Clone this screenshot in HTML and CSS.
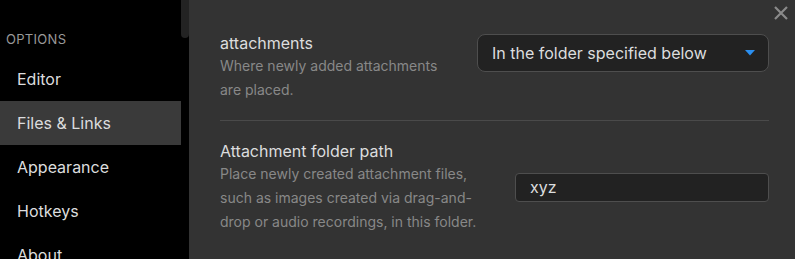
FILE: index.html
```html
<!DOCTYPE html>
<html>
<head>
<meta charset="utf-8">
<link rel="stylesheet" href="styles.css">
</head>
<body>
<div class="app">
  <aside class="sidebar">
    <nav class="nav">
      <div class="nav-heading">Options</div>
      <div class="nav-item">Editor</div>
      <div class="nav-item active">Files &amp; Links</div>
      <div class="nav-item">Appearance</div>
      <div class="nav-item">Hotkeys</div>
      <div class="nav-item">About</div>
    </nav>
    <div class="scroll-track"><div class="scroll-thumb"></div></div>
  </aside>
  <main class="content">
    <svg class="close" width="14" height="14" viewBox="0 0 14 14"><path d="M1 1 L13 13 M13 1 L1 13" stroke="#8a8a8a" stroke-width="2.2" fill="none"/></svg>
    <div class="setting first">
      <div class="info">
        <div class="name">attachments</div>
        <div class="desc">Where newly added attachments are placed.</div>
      </div>
      <div class="dropdown">
        <span>In the folder specified below</span>
        <svg class="caret" width="10" height="6" viewBox="0 0 10 6"><path d="M0 0 H10 L5 5.5 Z" fill="#2b8ff0"/></svg>
      </div>
    </div>
    <div class="setting second">
      <div class="info">
        <div class="name">Attachment folder path</div>
        <div class="desc">Place newly created attachment files, such as images created via drag-and-drop or audio recordings, in this folder.</div>
      </div>
      <div class="input">xyz</div>
    </div>
  </main>
</div>
</body>
</html>
```
FILE: styles.css
```css
html, body {
  margin: 0;
  padding: 0;
  height: 100%;
  overflow: hidden;
}
body {
  font-family: Inter, "Noto Sans", sans-serif;
  background: #333333;
  color: #dcddde;
}
.app {
  display: flex;
  height: 259px;
}
.sidebar {
  display: flex;
  background: #000;
  flex: none;
}
.nav {
  width: 181px;
  padding-top: 29px;
}
.nav-heading {
  font-size: 13px;
  text-transform: uppercase;
  color: #999;
  padding-left: 6px;
  line-height: 20px;
  letter-spacing: 0.3px;
  margin-bottom: 8px;
}
.nav-item {
  height: 44px;
  line-height: 44px;
  padding-left: 17px;
  font-size: 16px;
  color: #dcddde;
}
.nav-item.active {
  background: #3a3a3a;
}
.scroll-track {
  width: 8px;
}
.scroll-thumb {
  height: 38px;
  background: #232323;
  border-radius: 0 0 4px 4px;
}
.content {
  position: relative;
  flex: 1;
  padding: 14px 26px 0 31px;
}
.close {
  position: absolute;
  top: 6px;
  right: 7px;
}
.setting {
  display: flex;
  padding: 18px 0;
}
.setting.first {
  border-bottom: 1px solid #4a4a4a;
  align-items: flex-start;
}
.setting.second {
  align-items: center;
  padding-top: 19px;
}
.info {
  flex: 1 1 auto;
  padding-right: 20px;
}
.name {
  font-size: 16px;
  line-height: 22px;
  color: #dcddde;
}
.desc {
  font-size: 14px;
  line-height: 24px;
  color: #888;
}
.dropdown {
  flex: none;
  box-sizing: border-box;
  width: 292px;
  height: 38px;
  margin-top: 2px;
  background: #222;
  border: 1px solid #4e4e4e;
  border-radius: 8px;
  display: flex;
  align-items: center;
  justify-content: space-between;
  padding: 0 13px 0 14px;
  font-size: 16px;
  color: #dcddde;
}
.caret {
  display: block;
}
.input {
  flex: none;
  box-sizing: border-box;
  width: 254px;
  height: 29px;
  background: #222;
  border: 1px solid #4e4e4e;
  border-radius: 4px;
  padding-left: 14px;
  font-size: 16px;
  line-height: 27px;
  color: #dcddde;
}
```
